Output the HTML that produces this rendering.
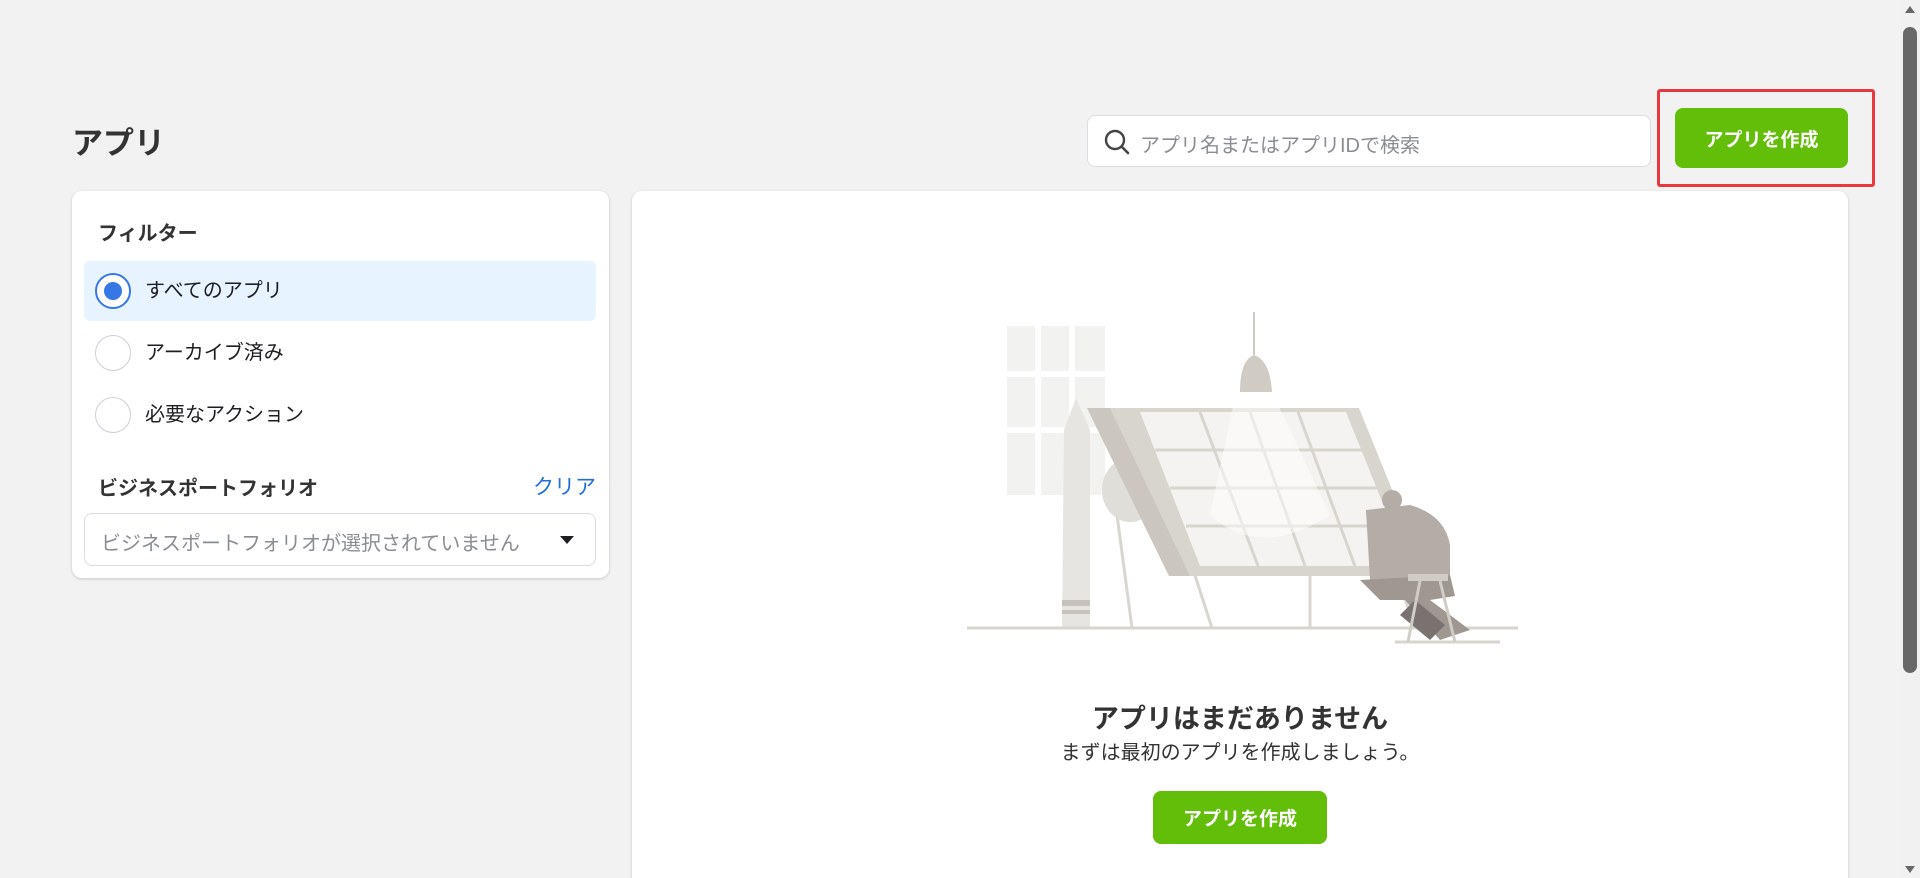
<!DOCTYPE html>
<html style="width:1920px;height:878px;overflow:hidden"><head><meta charset="utf-8"><style>
*{box-sizing:border-box;margin:0;padding:0}
body{width:1920px;height:878px;background:#f2f2f2;font-family:"Liberation Sans","Noto Sans CJK JP",sans-serif;color:#1c1e21;position:relative;overflow:hidden}
.abs{position:absolute}
.card{background:#fff;border-radius:10px;box-shadow:0 1px 3px rgba(0,0,0,.18)}
.radio{position:absolute;left:95px;width:36px;height:36px;border-radius:50%;border:1px solid #ccd0d5;background:#fff}
.lbl{position:absolute;left:145px;font-size:20px;color:#1c1e21;line-height:24px}
.btn{background:#63be09;color:#fff;font-weight:bold;border-radius:8px;display:flex;align-items:center;justify-content:center;font-size:19px}
</style></head><body>
<div class="abs" style="left:72px;top:118px;font-size:31px;font-weight:bold;color:#333">アプリ</div>

<div class="abs" style="left:1087px;top:115px;width:564px;height:52px;background:#fff;border:1px solid #dadde1;border-radius:8px"></div>
<svg class="abs" style="left:1103px;top:128px" width="28" height="28" viewBox="0 0 28 28"><circle cx="12" cy="12" r="9" fill="none" stroke="#444" stroke-width="2.4"/><path d="M18.5 18.5L25 25" stroke="#444" stroke-width="2.6" stroke-linecap="round"/></svg>
<div class="abs" style="left:1140px;top:129px;font-size:20px;color:#8a8d91">アプリ名またはアプリIDで検索</div>

<div class="abs" style="left:1657px;top:89px;width:218px;height:98px;border:3px solid #e8393e;border-radius:3px"></div>
<div class="abs btn" style="left:1675px;top:108px;width:173px;height:60px">アプリを作成</div>

<div class="abs" style="left:1900px;top:0;width:20px;height:878px;background:#f1f1f1"></div>
<div class="abs" style="left:1903px;top:27px;width:14px;height:646px;background:#686868;border-radius:7px"></div>
<div class="abs" style="left:1905px;top:6px;width:0;height:0;border-left:5px solid transparent;border-right:5px solid transparent;border-bottom:7px solid #686868"></div>
<div class="abs" style="left:1905px;top:866px;width:0;height:0;border-left:5px solid transparent;border-right:5px solid transparent;border-top:7px solid #686868"></div>

<div class="abs card" style="left:72px;top:191px;width:537px;height:387px"></div>
<div class="abs" style="left:98px;top:217px;font-size:20px;font-weight:bold;color:#333">フィルター</div>
<div class="abs" style="left:84px;top:261px;width:512px;height:60px;background:#e7f3ff;border-radius:6px"></div>
<div class="radio" style="top:273px;border:2px solid #3578e5"></div>
<div class="abs" style="left:104px;top:282px;width:18px;height:18px;border-radius:50%;background:#3578e5"></div>
<div class="lbl" style="top:279px">すべてのアプリ</div>
<div class="radio" style="top:335px"></div>
<div class="lbl" style="top:341px">アーカイブ済み</div>
<div class="radio" style="top:397px"></div>
<div class="lbl" style="top:403px">必要なアクション</div>
<div class="abs" style="left:98px;top:472px;font-size:20px;font-weight:bold;color:#333">ビジネスポートフォリオ</div>
<div class="abs" style="left:533px;top:471px;font-size:21px;color:#216fdb">クリア</div>
<div class="abs" style="left:84px;top:513px;width:512px;height:53px;border:1px solid #dadde1;border-radius:8px"></div>
<div class="abs" style="left:101px;top:527px;font-size:20px;color:#8a8d91">ビジネスポートフォリオが選択されていません</div>
<div class="abs" style="left:560px;top:536px;width:0;height:0;border-left:7px solid transparent;border-right:7px solid transparent;border-top:8px solid #1c1e21"></div>

<div class="abs card" style="left:632px;top:191px;width:1216px;height:700px"></div>
<svg class="abs" style="left:960px;top:300px" width="570" height="350" viewBox="960 300 570 350">
<g fill="#f2f2f1">
<rect x="1007" y="326" width="28" height="45"/><rect x="1041" y="326" width="28" height="45"/><rect x="1075" y="326" width="30" height="45"/>
<rect x="1007" y="377" width="28" height="50"/><rect x="1041" y="377" width="28" height="50"/><rect x="1075" y="377" width="30" height="50"/>
<rect x="1007" y="433" width="28" height="62"/><rect x="1041" y="433" width="28" height="62"/><rect x="1075" y="433" width="30" height="62"/>
</g>
<g stroke="#d9d6d0" stroke-width="3" fill="none">
<path d="M1115 500L1132 628M1190 560L1212 628M1310 560L1310 628M1392 560L1415 628"/>
</g>
<ellipse cx="1130" cy="490" rx="28" ry="32" fill="#e0ded9"/>
<path d="M1087 408L1359 408L1427 576L1169 576Z" fill="#d8d5cf"/>
<path d="M1140 412L1346 412L1408 566L1200 566Z" fill="#f4f3f1"/>
<g stroke="#d8d5cf" stroke-width="3">
<path d="M1155 450L1362 450M1170 488L1377 488M1186 526L1392 526M1200 412L1258 566M1250 412L1305 566M1298 412L1355 566"/>
</g>
<path d="M1087 408L1110 408L1190 576L1169 576Z" fill="#cbc7c0"/>
<path d="M1236 392L1272 392L1330 515Q1260 560 1210 515Z" fill="#fff" opacity=".5"/>
<path d="M1254 312V355" stroke="#cdc9c3" stroke-width="2"/>
<path d="M1240 392Q1240 360 1254 355Q1270 360 1272 392Z" fill="#d0ccc5"/>
<path d="M1076 398L1090 430L1090 627L1062 627L1064 430Z" fill="#e7e5e1"/>
<rect x="1062" y="600" width="28" height="6" fill="#c7c3bc"/><rect x="1062" y="610" width="28" height="4" fill="#c7c3bc"/>
<path d="M967 628H1518" stroke="#d8d5cf" stroke-width="3"/>
<path d="M1395 642H1500" stroke="#d8d5cf" stroke-width="3"/>
<circle cx="1392" cy="500" r="10" fill="#b4aca6"/>
<path d="M1366 510L1410 505Q1445 515 1450 545L1450 575L1370 580Z" fill="#b4aca6"/>
<path d="M1360 580L1450 575L1455 596L1430 600L1470 630L1440 640L1405 600L1380 600Z" fill="#9f9792"/>
<path d="M1415 600L1445 625L1430 640L1400 615Z" fill="#7a7270"/>
<rect x="1408" y="574" width="40" height="7" fill="#d0ccc6"/>
<path d="M1420 581L1408 642M1440 581L1455 642" stroke="#d0ccc6" stroke-width="3"/>
</svg>
<div class="abs" style="left:632px;top:697px;width:1216px;text-align:center;font-size:27px;font-weight:bold;color:#333">アプリはまだありません</div>
<div class="abs" style="left:632px;top:736px;width:1216px;text-align:center;font-size:20px;color:#333">まずは最初のアプリを作成しましょう。</div>
<div class="abs btn" style="left:1153px;top:791px;width:174px;height:53px">アプリを作成</div>
</body></html>
